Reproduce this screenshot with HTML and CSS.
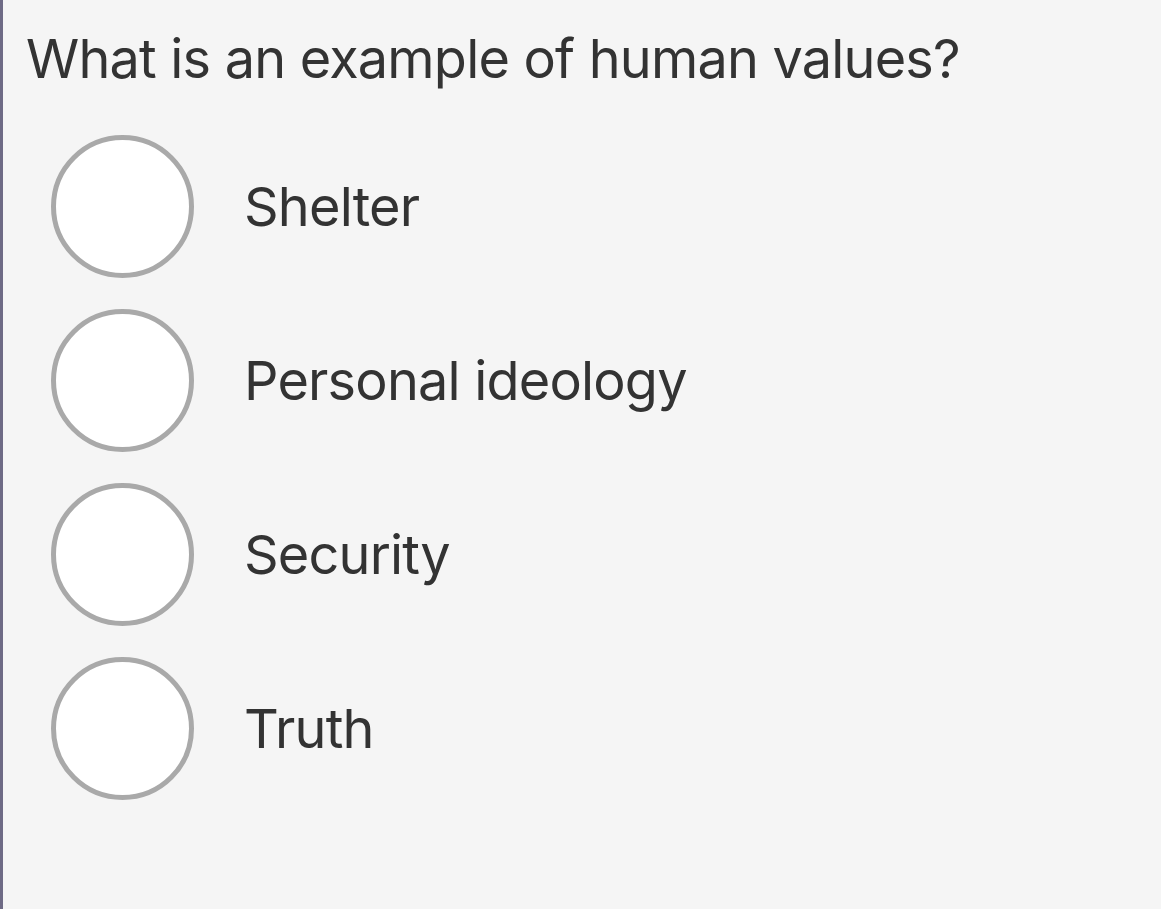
FILE: index.html
```html
<!DOCTYPE html>
<html>
<head>
<meta charset="utf-8">
<link rel="stylesheet" href="styles.css">
</head>
<body>
<div class="page">
  <h1 class="question">What is an example of human values?</h1>
  <div class="options">
    <label class="option"><span class="radio"></span><span class="label">Shelter</span></label>
    <label class="option"><span class="radio"></span><span class="label">Personal ideology</span></label>
    <label class="option"><span class="radio"></span><span class="label">Security</span></label>
    <label class="option"><span class="radio"></span><span class="label">Truth</span></label>
  </div>
</div>
</body>
</html>
```
FILE: styles.css
```css
html, body {
  margin: 0;
  padding: 0;
  height: 100%;
}
body {
  background: #f5f5f5;
  font-family: Inter, "Noto Sans", sans-serif;
  color: #333333;
}
.page {
  min-height: 100%;
  box-sizing: border-box;
  border-left: 3px solid #6e6a85;
  padding: 26px 0 0 23px;
}
.question {
  margin: 0;
  font-size: 54px;
  line-height: 65px;
  font-weight: 400;
  letter-spacing: -0.8px;
  color: #333333;
}
.options {
  margin-top: 44px;
  margin-left: 25px;
  display: flex;
  flex-direction: column;
  gap: 31px;
}
.option {
  display: flex;
  align-items: center;
  height: 143px;
}
.radio {
  width: 143px;
  height: 143px;
  box-sizing: border-box;
  border: 5px solid #a9a9a9;
  border-radius: 50%;
  background: #ffffff;
  flex: none;
}
.label {
  margin-left: 50px;
  font-size: 54px;
  line-height: 65px;
  letter-spacing: -0.8px;
  color: #333333;
}
```
